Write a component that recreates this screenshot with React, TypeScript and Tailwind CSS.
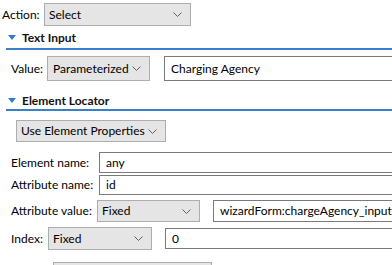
import React from 'react';

const Chevron: React.FC = () => (
  <svg width="9" height="5" viewBox="0 0 9 5" className="shrink-0">
    <polyline points="0.5,0.5 4.5,4.5 8.5,0.5" fill="none" stroke="#606060" strokeWidth="1" />
  </svg>
);

const Combo: React.FC<{ label: string; className: string }> = ({ label, className }) => (
  <div
    className={`flex shrink-0 items-center justify-between whitespace-nowrap bg-[#e5e5e5] border border-[#adadad] pl-[4px] pr-[8px] text-black ${className}`}
  >
    <span>{label}</span>
    <Chevron />
  </div>
);

const TextBox: React.FC<{ value: string; className: string }> = ({ value, className }) => (
  <div className={`flex shrink-0 items-center bg-white border border-[#7a7a7a] pl-[6px] text-black whitespace-nowrap ${className}`}>
    {value}
  </div>
);

const Section: React.FC<{ title: string; className: string; gap: string }> = ({ title, className, gap }) => (
  <div className={className}>
    <div className={`flex items-center h-[13px] pl-[8px] ${gap}`}>
      <svg width="8" height="5" viewBox="0 0 8 5" className="mr-[6px]">
        <polygon points="0,0 8,0 4,5" fill="#2f7bd0" />
      </svg>
      <span className="font-bold text-[12px] text-[#111]">{title}</span>
    </div>
    <div className="ml-[6px] h-[2px] bg-[#3a80c8]" />
  </div>
);

export default function App() {
  return (
    <div className="w-[392px] h-[265px] overflow-hidden bg-white text-[12px] leading-none text-black font-['Lato',sans-serif]">
      {/* Action */}
      <div className="flex items-center pt-[3px] pl-[2px] whitespace-nowrap">
        <span className="w-[42px] shrink-0">Action:</span>
        <Combo label="Select" className="w-[147px] h-[23px]" />
      </div>

      <Section title="Text Input" className="mt-[5px]" gap="mb-[4px]" />

      {/* Value */}
      <div className="flex items-center mt-[6px] pl-[11px] whitespace-nowrap">
        <span className="w-[36px] shrink-0">Value:</span>
        <Combo label="Parameterized" className="w-[103px] h-[25px] pl-[5px]" />
        <TextBox value="Charging Agency" className="ml-[14px] w-[260px] h-[25px]" />
      </div>

      <Section title="Element Locator" className="mt-[13px]" gap="mb-[2px]" />

      <div className="pl-[16px] mt-[9px]">
        <Combo label="Use Element Properties" className="w-[150px] h-[22px]" />
      </div>

      <div className="flex items-center mt-[10px] pl-[11px] whitespace-nowrap">
        <span className="w-[88px] shrink-0">Element name:</span>
        <TextBox value="any" className="w-[300px] h-[21px]" />
      </div>
      <div className="flex items-center mt-[2px] pl-[11px] whitespace-nowrap">
        <span className="w-[88px] shrink-0">Attribute name:</span>
        <TextBox value="id" className="w-[300px] h-[20px]" />
      </div>
      <div className="flex items-center mt-[5px] pl-[11px] whitespace-nowrap">
        <span className="w-[86px] shrink-0">Attribute value:</span>
        <Combo label="Fixed" className="w-[103px] h-[22px]" />
        <TextBox value="wizardForm:chargeAgency_input" className="ml-[13px] w-[200px] h-[22px]" />
      </div>
      <div className="flex items-center mt-[5px] pl-[11px] whitespace-nowrap">
        <span className="w-[37px] shrink-0">Index:</span>
        <Combo label="Fixed" className="w-[104px] h-[23px]" />
        <TextBox value="0" className="ml-[13px] w-[250px] h-[21px]" />
      </div>
      <div className="pl-[53px] mt-[12px]">
        <div className="w-[159px] h-[10px] bg-[#e5e5e5] border border-[#adadad]" />
      </div>
    </div>
  );
}
